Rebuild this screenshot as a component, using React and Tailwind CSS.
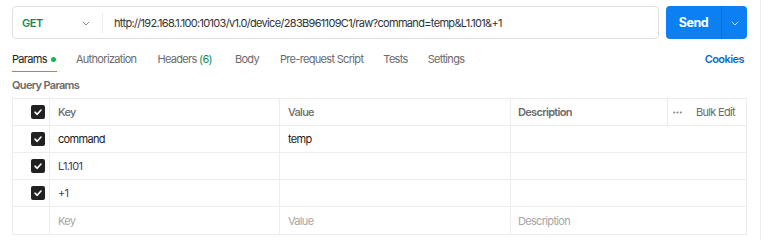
import React from "react";

function Check() {
  return (
    <div className="w-[14px] h-[14px] rounded-[2px] bg-[#212121] flex items-center justify-center">
      <svg width="10" height="10" viewBox="0 0 10 10" fill="none">
        <path d="M2 5.2 L4.2 7.3 L8 3" stroke="white" strokeWidth="1.6" strokeLinecap="round" strokeLinejoin="round" />
      </svg>
    </div>
  );
}

function Chevron({ color = "#6b6b6b" }) {
  return (
    <svg width="8" height="5" viewBox="0 0 8 5" fill="none">
      <path d="M1 1 L4 4 L7 1" stroke={color} strokeWidth="1" strokeLinecap="round" strokeLinejoin="round" />
    </svg>
  );
}

function Row({ checked, k, v, d, keyCls, valCls, descCls, header }) {
  return (
    <div className="flex h-[27px] border-b border-[#ededed] last:border-b-0">
      <div className="w-[37px] shrink-0 border-r border-[#ededed] flex items-center pl-[18px]">
        {checked && <Check />}
      </div>
      <div className={`w-[230px] shrink-0 border-r border-[#ededed] flex items-center pl-[8px] pt-[1px] ${keyCls}`}>{k}</div>
      <div className={`w-[231px] shrink-0 border-r border-[#ededed] flex items-center pl-[8px] pt-[1px] ${valCls}`}>{v}</div>
      {header ? (
        <>
          <div className={`w-[157px] shrink-0 border-r border-[#ededed] flex items-center pl-[7px] pt-[1px] ${descCls}`}>{d}</div>
          <div className="flex-1 flex items-center pl-[5px] gap-[14px] text-[#6b6b6b]">
            <svg width="9" height="3" viewBox="0 0 9 3">
              <circle cx="1.2" cy="1.5" r="1.1" fill="#8a8a8a" />
              <circle cx="4.5" cy="1.5" r="1.1" fill="#8a8a8a" />
              <circle cx="7.8" cy="1.5" r="1.1" fill="#8a8a8a" />
            </svg>
            <span>Bulk Edit</span>
          </div>
        </>
      ) : (
        <div className={`flex-1 flex items-center pl-[7px] pt-[1px] ${descCls}`}>{d}</div>
      )}
    </div>
  );
}

export default function App() {
  const font = { fontFamily: "Inter, 'Noto Sans', sans-serif" };
  return (
    <div className="w-[768px] h-[240px] bg-white overflow-hidden text-[11px] tracking-[-0.68px]" style={font}>
      <div className="w-[761px] h-[240px] border-r border-[#ececec] pl-[12px] pt-[6px]">
        {/* URL row */}
        <div className="flex gap-[7px] h-[33px]">
          <div className="w-[647px] h-full border border-[#e0e0e0] rounded-[4px] flex items-center">
            <div className="w-[89px] flex items-center pl-[9px] pt-[2px]">
              <span className="font-semibold text-[#0f8a5a] text-[11px] tracking-[-0.4px]">GET</span>
              <span className="ml-[39px] flex"><Chevron color="#8a8a8a" /></span>
            </div>
            <div className="w-px h-[20px] bg-[#ebebeb]" />
            <div className="pl-[11px] pt-[2px] text-[#333333] text-[11px] whitespace-nowrap">
              http://192.168.1.100:10103/v1.0/device/283B961109C1/raw?command=temp&amp;L1.101&amp;+1
            </div>
          </div>
          <div className="w-[81px] h-full bg-[#0c7ff2] rounded-[4px] flex">
            <div className="w-[55px] flex items-center justify-center pt-[2px] text-white font-bold text-[12.5px] tracking-[-0.4px]">Send</div>
            <div className="w-px bg-[#0a70d8]" />
            <div className="flex-1 flex items-center justify-center pt-[1px]">
              <Chevron color="#cfe4fb" />
            </div>
          </div>
        </div>

        {/* Tabs */}
        <div className="flex items-center h-[26px] mt-[7px] pr-[16px] text-[#6b6b6b]">
          <div className="relative flex items-center h-full">
            <span className="text-[#212121]">Params</span>
            <span className="ml-[4px] w-[5px] h-[5px] rounded-full bg-[#0cbb52]" />
            <div className="absolute left-0 right-[-1px] bottom-0 h-[1px] bg-[#f26b3a]" />
          </div>
          <span className="ml-[20px]">Authorization</span>
          <span className="ml-[21px]">Headers <span className="text-[#0f8a5a]">(6)</span></span>
          <span className="ml-[23px]">Body</span>
          <span className="ml-[21px]">Pre-request Script</span>
          <span className="ml-[20px]">Tests</span>
          <span className="ml-[20px]">Settings</span>
          <span className="ml-auto text-[#0b6bcb] font-semibold tracking-[-0.55px]">Cookies</span>
        </div>

        <div className="h-[20px] flex items-center mt-[3px] text-[#6b6b6b] font-semibold">Query Params</div>

        {/* Table */}
        <div className="mt-[3px] w-[735px] border border-[#ededed]">
          <Row header checked k="Key" v="Value" d="Description" keyCls="text-[#6b6b6b] font-medium" valCls="text-[#6b6b6b] font-medium" descCls="text-[#6b6b6b] font-semibold" />
          <Row checked k="command" v="temp" d="" keyCls="text-[#212121]" valCls="text-[#212121]" />
          <Row checked k="L1.101" v="" d="" keyCls="text-[#4e3a5c]" />
          <Row checked k="+1" v="" d="" keyCls="text-[#4e3a5c]" />
          <Row k="Key" v="Value" d="Description" keyCls="text-[#a6a6a6]" valCls="text-[#a6a6a6]" descCls="text-[#a6a6a6]" />
        </div>
      </div>
    </div>
  );
}
